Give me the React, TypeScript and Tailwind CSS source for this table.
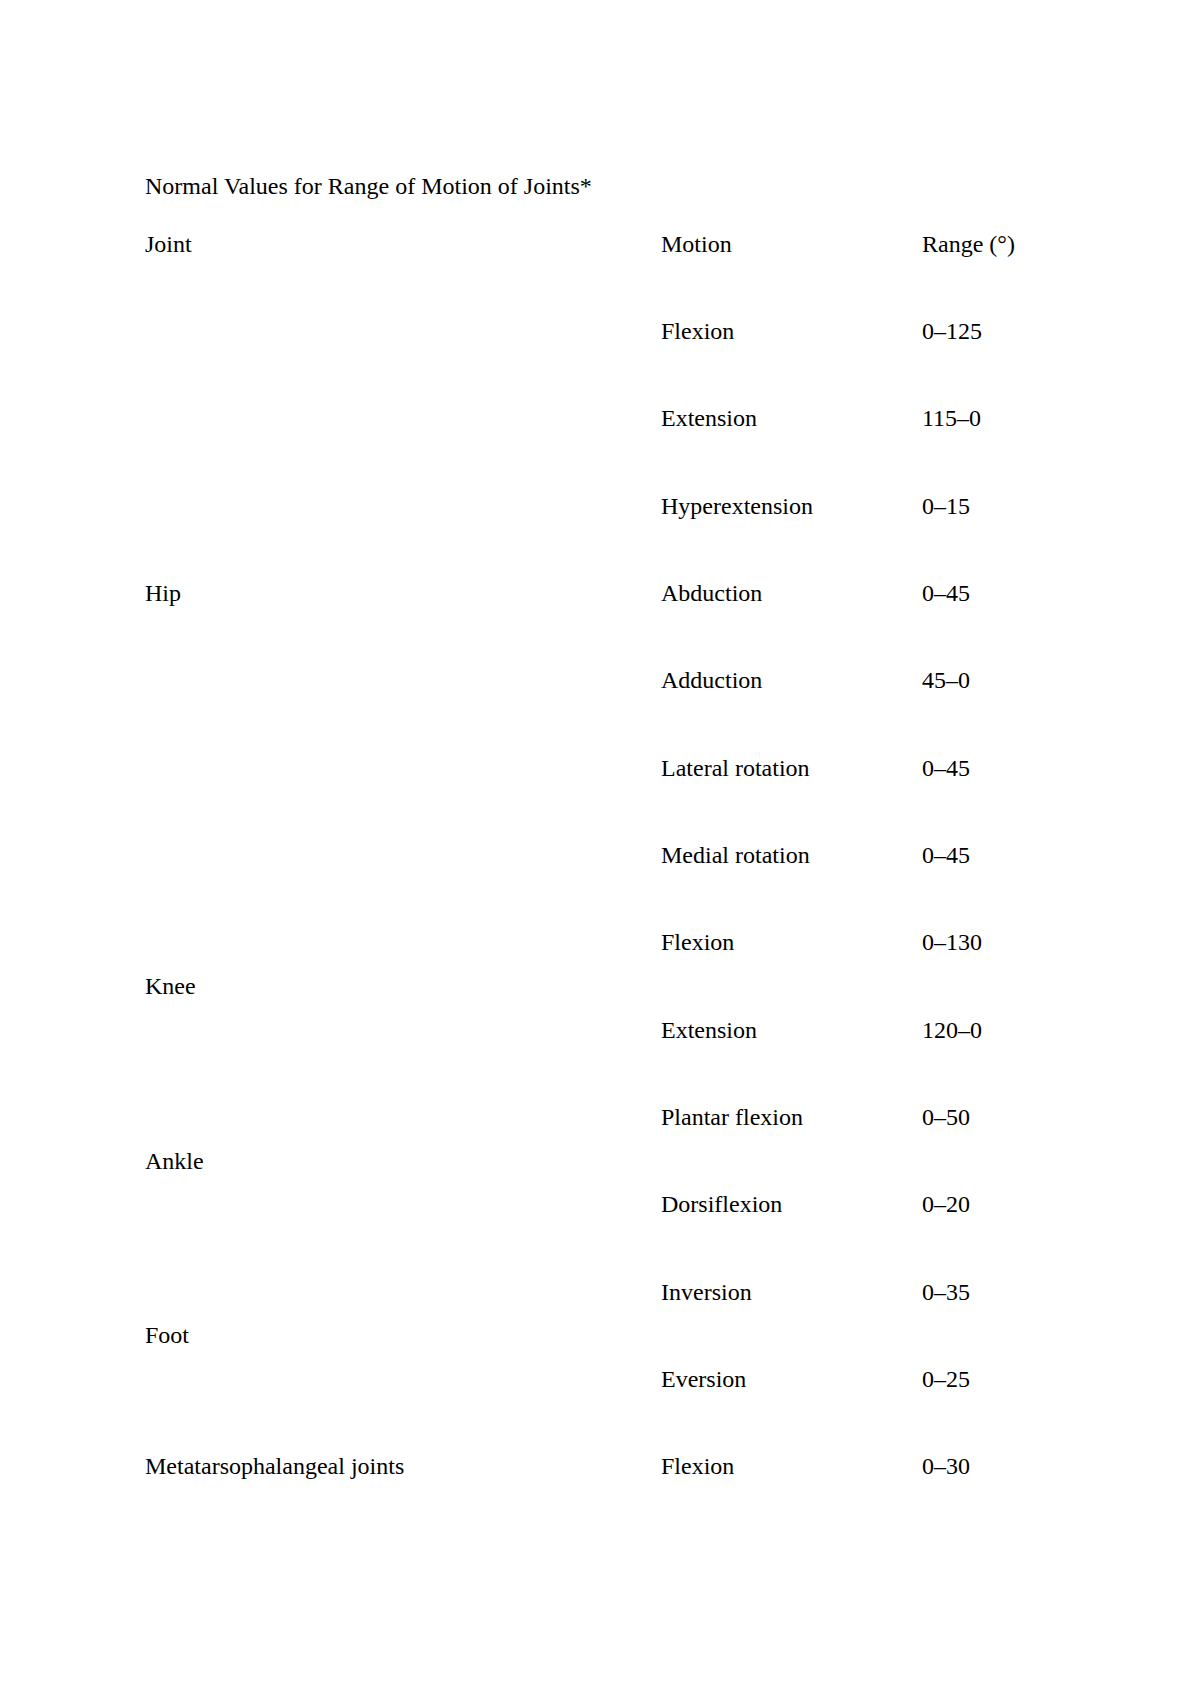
import React from "react";

type Group = { joint: string; rows: [string, string][] };

const groups: Group[] = [
  {
    joint: "Hip",
    rows: [
      ["Flexion", "0–125"],
      ["Extension", "115–0"],
      ["Hyperextension", "0–15"],
      ["Abduction", "0–45"],
      ["Adduction", "45–0"],
      ["Lateral rotation", "0–45"],
      ["Medial rotation", "0–45"],
    ],
  },
  {
    joint: "Knee",
    rows: [
      ["Flexion", "0–130"],
      ["Extension", "120–0"],
    ],
  },
  {
    joint: "Ankle",
    rows: [
      ["Plantar flexion", "0–50"],
      ["Dorsiflexion", "0–20"],
    ],
  },
  {
    joint: "Foot",
    rows: [
      ["Inversion", "0–35"],
      ["Eversion", "0–25"],
    ],
  },
  {
    joint: "Metatarsophalangeal joints",
    rows: [["Flexion", "0–30"]],
  },
];

const spanClass: Record<number, string> = {
  1: "row-span-1",
  2: "row-span-2",
  7: "row-span-7",
};

export default function App() {
  return (
    <div
      className="min-h-[1698px] w-[1200px] bg-white text-black pl-[145px] pt-[172px]"
      style={{ fontFamily: '"Liberation Serif", "Times New Roman", serif' }}
    >
      <p className="text-[24px] leading-[28px] m-0">
        Normal Values for Range of Motion of Joints*
      </p>
      <div className="grid grid-cols-[516px_261px_1fr] auto-rows-[87.33px] text-[24px] leading-[28px]">
        <div className="col-start-1 flex items-center">Joint</div>
        <div className="col-start-2 flex items-center">Motion</div>
        <div className="col-start-3 flex items-center">Range (°)</div>
        {groups.map((g) => (
          <React.Fragment key={g.joint}>
            <div className={`col-start-1 flex items-center ${spanClass[g.rows.length]}`}>
              {g.joint}
            </div>
            {g.rows.map(([m, r], i) => (
              <React.Fragment key={g.joint + i}>
                <div className="col-start-2 flex items-center">{m}</div>
                <div className="col-start-3 flex items-center">{r}</div>
              </React.Fragment>
            ))}
          </React.Fragment>
        ))}
      </div>
    </div>
  );
}
